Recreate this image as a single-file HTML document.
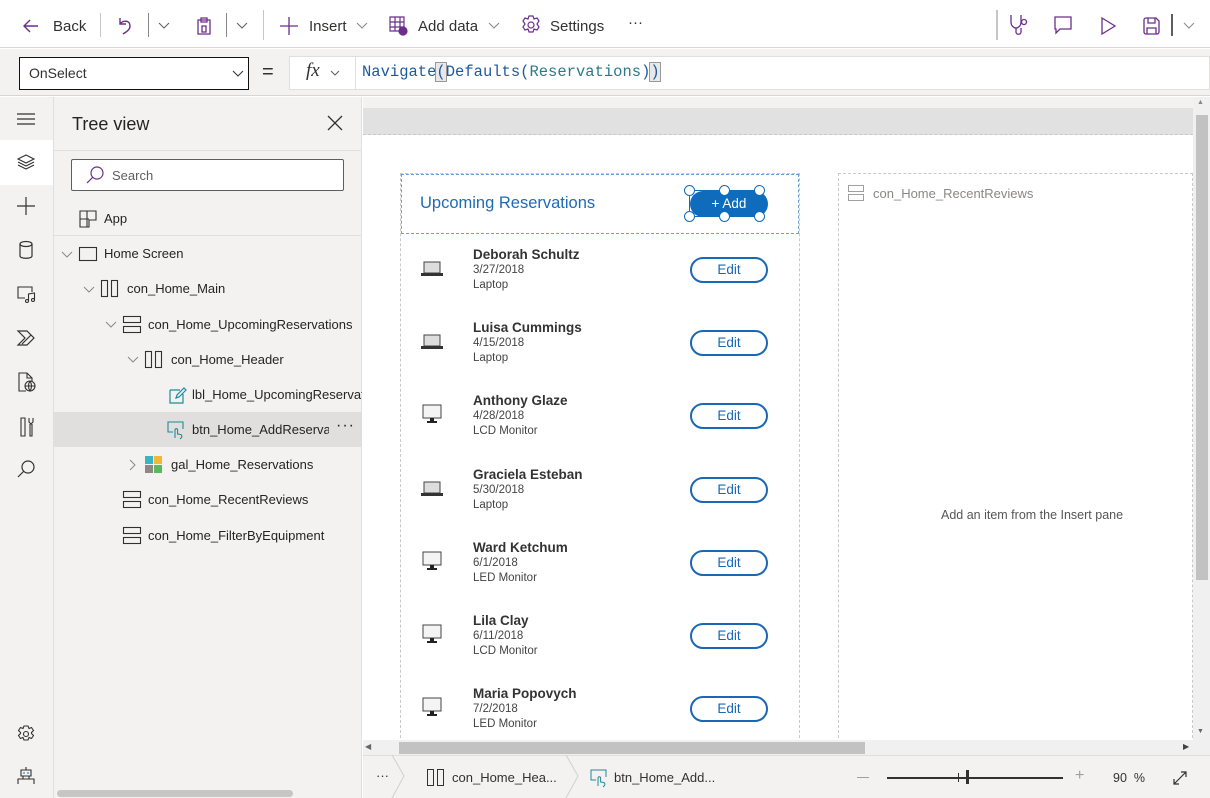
<!DOCTYPE html>
<html><head><meta charset="utf-8"><style>
*{box-sizing:border-box;margin:0;padding:0}
body{width:1210px;height:798px;overflow:hidden;font-family:"Liberation Sans",sans-serif;background:#fff;position:relative;color:#323130}
.a{position:absolute}
.t{position:absolute;white-space:nowrap}
svg{position:absolute;overflow:visible}
.tb{font-size:15px;color:#323130}
.tree{font-size:13px;color:#252423}
.nm{font-size:13.5px;font-weight:bold;color:#333}
.sm{font-size:11.5px;color:#444}
.edit{position:absolute;left:690px;width:78px;height:26px;border:2px solid #1a68b5;border-radius:13px;color:#1a68b5;font-size:13.5px;text-align:center;line-height:22px;background:#fff}
.h{position:absolute;width:11px;height:11px;border:1.5px solid #0f6cbd;border-radius:50%;background:#fff}
</style></head><body>
<!-- top toolbar -->
<div class="a" style="left:0;top:0;width:1210px;height:48px;background:#fff;border-bottom:1px solid #d8d6d4"></div>
<svg width="20" height="20" style="left:22px;top:17px" fill="none" stroke="#6b2f8a" stroke-width="1.4"><path d="M16 9H2M8 3L2 9l6 6"/></svg>
<div class="t tb" style="left:53px;top:18px">Back</div>
<div class="a" style="left:100px;top:13px;width:1px;height:24px;background:#c8c6c4"></div>
<svg width="20" height="20" style="left:116px;top:16px" fill="none" stroke="#6b2f8a" stroke-width="1.4"><path d="M4 2v6h6M4 8c3-4 10-4 10 2c0 4-4 6-7 8"/></svg>
<div class="a" style="left:148px;top:13px;width:1px;height:24px;background:#8a8886"></div>
<svg width="12" height="8" style="left:158px;top:22px" fill="none" stroke="#605e5c"><path d="M1 1l5 5 5-5"/></svg>
<svg width="18" height="20" style="left:195px;top:16px" fill="none" stroke="#6b2f8a" stroke-width="1.3"><path d="M3 4h12v14H3zM6 2h6v4H6zM7 10h4v6H7z"/></svg>
<div class="a" style="left:226px;top:13px;width:1px;height:24px;background:#8a8886"></div>
<svg width="12" height="8" style="left:236px;top:22px" fill="none" stroke="#605e5c"><path d="M1 1l5 5 5-5"/></svg>
<div class="a" style="left:263px;top:10px;width:1px;height:30px;background:#c8c6c4"></div>
<svg width="18" height="18" style="left:280px;top:17px" fill="none" stroke="#6b2f8a" stroke-width="1.3"><path d="M9 0v18M0 9h18"/></svg>
<div class="t tb" style="left:309px;top:18px">Insert</div>
<svg width="12" height="8" style="left:356px;top:22px" fill="none" stroke="#8a8886"><path d="M1 1l5 5 5-5"/></svg>
<svg width="20" height="20" style="left:389px;top:16px" fill="none" stroke="#6b2f8a" stroke-width="1.2"><path d="M1 1h14v14H1zM1 6h14M1 11h14M6 1v14M11 1v14"/><circle cx="14" cy="15" r="4" fill="#6b2f8a"/></svg>
<div class="t tb" style="left:418px;top:18px">Add data</div>
<svg width="12" height="8" style="left:488px;top:22px" fill="none" stroke="#8a8886"><path d="M1 1l5 5 5-5"/></svg>
<svg width="20" height="20" style="left:521px;top:15px" fill="none" stroke="#6b2f8a" stroke-width="1.2"><circle cx="10" cy="10" r="3"/><path d="M8 1h4l1 3 3-1 2 3-2 3 2 3-2 3-3-1-1 3H8l-1-3-3 1-2-3 2-3-2-3 2-3 3 1z"/></svg>
<div class="t tb" style="left:550px;top:18px">Settings</div>
<div class="t tb" style="left:628px;top:14px">···</div>
<div class="a" style="left:996px;top:10px;width:2px;height:30px;background:#c8c6c4"></div>
<svg width="20" height="22" style="left:1009px;top:14px" fill="none" stroke="#6b2f8a" stroke-width="1.3"><path d="M2 1v7c0 4 3 6 5 6s5-2 5-6V1M7 14v4c0 3 5 3 5 0v-4"/><circle cx="15" cy="8" r="2.5"/></svg>
<svg width="22" height="20" style="left:1053px;top:16px" fill="none" stroke="#6b2f8a" stroke-width="1.3"><path d="M2 1h16v12H7l-4 4v-4H2z"/></svg>
<svg width="18" height="18" style="left:1100px;top:17px" fill="none" stroke="#6b2f8a" stroke-width="1.3"><path d="M2 1l13 8-13 8z"/></svg>
<svg width="18" height="18" style="left:1143px;top:17px" fill="none" stroke="#6b2f8a" stroke-width="1.3"><path d="M1 3a2 2 0 0 1 2-2h10l3 3v11a2 2 0 0 1-2 2H3a2 2 0 0 1-2-2zM5 1v5h7V1M4 17v-6h9v6"/></svg>
<div class="a" style="left:1171px;top:14px;width:2px;height:22px;background:#605e5c"></div>
<svg width="12" height="8" style="left:1183px;top:22px" fill="none" stroke="#8a8886"><path d="M1 1l5 5 5-5"/></svg>
<!-- formula bar -->
<div class="a" style="left:0;top:49px;width:1210px;height:47px;background:#f3f2f1;border-bottom:1px solid #d8d6d4"></div>
<div class="a" style="left:19px;top:57px;width:230px;height:33px;background:#fff;border:1px solid #111"></div>
<div class="t" style="left:29px;top:65px;font-size:14px;color:#323130">OnSelect</div>
<svg width="12" height="8" style="left:232px;top:70px" fill="none" stroke="#323130"><path d="M1 1l5 5 5-5"/></svg>
<div class="t" style="left:262px;top:61px;font-size:20px">=</div>
<div class="a" style="left:289px;top:56px;width:921px;height:34px;background:#fff;border:1px solid #e1dfdd"></div>
<div class="a" style="left:355px;top:56px;width:1px;height:34px;background:#e1dfdd"></div>
<div class="t" style="left:306px;top:60px;font-size:19px;font-style:italic;font-family:'Liberation Serif',serif">fx</div>
<svg width="10" height="6" style="left:330px;top:70px" fill="none" stroke="#605e5c"><path d="M1 1l4 4 4-4"/></svg>
<div class="t" style="left:362px;top:63px;font-family:'Liberation Mono',monospace;font-size:15.5px;color:#1e5a9e">Navigate<span style="background:#e8e8e8;outline:1px solid #999">(</span>Defaults(<span style="color:#2a7a8a">Reservations</span>)<span style="background:#e8e8e8;outline:1px solid #999">)</span></div>
<!-- left rail -->
<div class="a" style="left:0;top:97px;width:54px;height:701px;background:#f3f2f1;border-right:1px solid #e1dfdd"></div>
<div class="a" style="left:0;top:140px;width:53px;height:45px;background:#fff"></div>
<svg width="18" height="12" style="left:17px;top:113px" fill="none" stroke="#323130" stroke-width="1.2"><path d="M0 1h18M0 6h18M0 11h18"/></svg>
<svg width="18" height="16" style="left:17px;top:154px" fill="none" stroke="#323130" stroke-width="1.1"><path d="M9 1l8 4-8 4-8-4zM1 8l8 4 8-4M1 11l8 4 8-4"/></svg>
<svg width="18" height="18" style="left:17px;top:197px" fill="none" stroke="#323130" stroke-width="1.2"><path d="M9 0v18M0 9h18"/></svg>
<svg width="14" height="18" style="left:19px;top:241px" fill="none" stroke="#323130" stroke-width="1.2"><ellipse cx="7" cy="3" rx="6" ry="2.5"/><path d="M1 3v12c0 3 12 3 12 0V3"/></svg>
<svg width="20" height="18" style="left:17px;top:285px" fill="none" stroke="#323130" stroke-width="1.1"><path d="M8 13H1V2h14v5"/><circle cx="10" cy="16" r="1.5"/><circle cx="16" cy="15" r="1.5"/><path d="M11.5 16V9l6-1v7"/></svg>
<svg width="18" height="16" style="left:17px;top:330px" fill="none" stroke="#323130" stroke-width="1.2"><path d="M1 1h9l7 7-7 7H1l7-7zM5 14l9-9"/></svg>
<svg width="18" height="20" style="left:18px;top:372px" fill="none" stroke="#323130" stroke-width="1.1"><path d="M8 19H1V1h8l5 5v3M9 1v5h5"/><circle cx="12" cy="14" r="5"/><path d="M7 14h10M12 9c-2 3-2 7 0 10c2-3 2-7 0-10"/></svg>
<svg width="16" height="20" style="left:19px;top:417px" fill="none" stroke="#323130" stroke-width="1.1"><path d="M2 1v18h4V1zM10 1v4l2 2 2-2V1M11 7v12h2V7"/></svg>
<svg width="18" height="18" style="left:17px;top:460px" fill="none" stroke="#323130" stroke-width="1.2"><circle cx="11" cy="7" r="6"/><path d="M7 11L1 17"/></svg>
<svg width="18" height="18" style="left:17px;top:725px" fill="none" stroke="#323130" stroke-width="1.1"><circle cx="9" cy="9" r="2.5"/><path d="M7 1h4l1 2.5 2.5-1 2 3-2 2 0 1 2 2-2 3-2.5-1-1 2.5H7l-1-2.5-2.5 1-2-3 2-2v-1l-2-2 2-3 2.5 1z"/></svg>
<svg width="18" height="18" style="left:17px;top:767px" fill="none" stroke="#323130" stroke-width="1.1"><path d="M9 0v3M4 3h10v6H4zM1 17v-5h16v5M6 9v3M12 9v3"/><path d="M6 6h2M10 6h2" stroke="#0f6cbd"/></svg>
<!-- tree panel -->
<div class="a" style="left:54px;top:97px;width:308px;height:701px;background:#f3f2f1;border-right:1px solid #e1dfdd"></div>
<div class="t" style="left:72px;top:114px;font-size:18px;color:#252423">Tree view</div>
<svg width="14" height="14" style="left:328px;top:116px" fill="none" stroke="#323130" stroke-width="1.3"><path d="M0 0l14 14M14 0L0 14"/></svg>
<div class="a" style="left:54px;top:150px;width:308px;height:1px;background:#e1dfdd"></div>
<div class="a" style="left:71px;top:159px;width:273px;height:32px;border:1px solid #605e5c;background:#fff;border-radius:2px"></div>
<svg width="18" height="18" style="left:86px;top:166px" fill="none" stroke="#6b2f8a" stroke-width="1.2"><circle cx="11" cy="7" r="6"/><path d="M7 11L1 17"/></svg>
<div class="t" style="left:112px;top:168px;font-size:13px;color:#605e5c">Search</div>
<svg width="18" height="18" style="left:79px;top:210px" fill="none" stroke="#323130" stroke-width="1.1"><path d="M1 1h16v9H10v7H1zM1 9h9M8 1v16"/></svg>
<div class="t tree" style="left:104px;top:211px">App</div>
<div class="a" style="left:54px;top:235px;width:308px;height:1px;background:#e1dfdd"></div>
<svg width="12" height="8" style="left:61px;top:251px" fill="none" stroke="#8a8886"><path d="M1 1l5 5 5-5"/></svg>
<svg width="19" height="14" style="left:79px;top:247px" fill="none" stroke="#323130" stroke-width="1.1"><rect x="0.5" y="0.5" width="17" height="13"/></svg>
<div class="t tree" style="left:104px;top:246px">Home Screen</div>
<svg width="12" height="8" style="left:83px;top:286px" fill="none" stroke="#8a8886"><path d="M1 1l5 5 5-5"/></svg>
<svg width="18" height="18" style="left:101px;top:280px" fill="none" stroke="#323130" stroke-width="1.1"><rect x="0.5" y="0.5" width="6" height="16"/><rect x="10.5" y="0.5" width="6" height="16"/></svg>
<div class="t tree" style="left:127px;top:281px">con_Home_Main</div>
<svg width="12" height="8" style="left:105px;top:321px" fill="none" stroke="#8a8886"><path d="M1 1l5 5 5-5"/></svg>
<svg width="18" height="18" style="left:123px;top:316px" fill="none" stroke="#323130" stroke-width="1.1"><rect x="0.5" y="0.5" width="17" height="6"/><rect x="0.5" y="10.5" width="17" height="6"/></svg>
<div class="t tree" style="left:148px;top:317px">con_Home_UpcomingReservations</div>
<svg width="12" height="8" style="left:127px;top:356px" fill="none" stroke="#8a8886"><path d="M1 1l5 5 5-5"/></svg>
<svg width="18" height="18" style="left:145px;top:351px" fill="none" stroke="#323130" stroke-width="1.1"><rect x="0.5" y="0.5" width="6" height="16"/><rect x="10.5" y="0.5" width="6" height="16"/></svg>
<div class="t tree" style="left:171px;top:352px">con_Home_Header</div>
<svg width="17" height="17" style="left:169px;top:387px" fill="none" stroke="#1f8a9a" stroke-width="1.2"><path d="M1 3h10M1 3v13h13V7"/><path d="M7 11l1-3 7-7 2 2-7 7z"/></svg>
<div class="t tree" style="left:192px;top:387px;width:170px;overflow:hidden">lbl_Home_UpcomingReservations</div>
<div class="a" style="left:54px;top:412px;width:308px;height:35px;background:#e1dfdd"></div>
<svg width="18" height="18" style="left:167px;top:421px" fill="none" stroke="#1f8a9a" stroke-width="1.1"><path d="M6 11H1V1h15v7"/><path d="M8 17v-8a1.3 1.3 0 0 1 2.6 0v4l3 0.5c1.5 0.5 1.5 1.5 1 3L13 18"/></svg>
<div class="t tree" style="left:192px;top:422px;width:137px;overflow:hidden">btn_Home_AddReservation</div>
<div class="t tree" style="left:336px;top:417px;font-size:16px;letter-spacing:1px">···</div>
<svg width="8" height="12" style="left:129px;top:459px" fill="none" stroke="#8a8886"><path d="M1 1l5 5-5 5"/></svg>
<div class="a" style="left:145px;top:456px;width:8px;height:8px;background:#3bb3c3"></div>
<div class="a" style="left:154px;top:456px;width:8px;height:8px;background:#f2b63a"></div>
<div class="a" style="left:145px;top:465px;width:8px;height:8px;background:#8a8886"></div>
<div class="a" style="left:154px;top:465px;width:8px;height:8px;background:#5cb85c"></div>
<div class="t tree" style="left:171px;top:457px">gal_Home_Reservations</div>
<svg width="18" height="18" style="left:123px;top:491px" fill="none" stroke="#323130" stroke-width="1.1"><rect x="0.5" y="0.5" width="17" height="6"/><rect x="0.5" y="10.5" width="17" height="6"/></svg>
<div class="t tree" style="left:148px;top:492px">con_Home_RecentReviews</div>
<svg width="18" height="18" style="left:123px;top:527px" fill="none" stroke="#323130" stroke-width="1.1"><rect x="0.5" y="0.5" width="17" height="6"/><rect x="0.5" y="10.5" width="17" height="6"/></svg>
<div class="t tree" style="left:148px;top:528px">con_Home_FilterByEquipment</div>
<div class="a" style="left:57px;top:790px;width:236px;height:7px;background:#c8c6c4;border-radius:4px"></div>
<!-- canvas -->
<div class="a" style="left:363px;top:97px;width:830px;height:643px;background:#f3f2f1"></div>
<div class="a" style="left:363px;top:108px;width:830px;height:27px;background:#e1e1e1;border-bottom:1px dashed #c8c8c8"></div>
<div class="a" style="left:363px;top:135px;width:830px;height:605px;background:#fff"></div>
<!-- left container -->
<div class="a" style="left:400px;top:173px;width:400px;height:570px;border:1px dashed #c8c8c8"></div>
<div class="a" style="left:401px;top:174px;width:398px;height:60px;border:1px dashed #6a9fd4"></div>
<div class="t" style="left:420px;top:194px;font-size:16.5px;color:#1e6bb8">Upcoming Reservations</div>
<div class="a" style="left:690px;top:191px;width:78px;height:26px;background:#0f6cbd;border-radius:13px;color:#fff;font-size:13.5px;text-align:center;line-height:26px">+ Add</div>
<div class="a" style="left:689px;top:190px;width:71px;height:27px;border:1px solid #0f6cbd"></div>
<div class="h" style="left:684px;top:185px"></div><div class="h" style="left:719px;top:185px"></div><div class="h" style="left:754px;top:185px"></div>
<div class="h" style="left:684px;top:211px"></div><div class="h" style="left:719px;top:211px"></div><div class="h" style="left:754px;top:211px"></div>
<!-- rows -->
<div id="rows"></div>
<!-- right container -->
<div class="a" style="left:838px;top:173px;width:355px;height:570px;border:1px dashed #c8c8c8"></div>
<svg width="16" height="16" style="left:848px;top:185px" fill="none" stroke="#a0a0a0" stroke-width="1"><rect x="0.5" y="0.5" width="15" height="6"/><rect x="0.5" y="9.5" width="15" height="6"/></svg>
<div class="t" style="left:873px;top:186px;font-size:13px;color:#8a8886">con_Home_RecentReviews</div>
<div class="t" style="left:941px;top:508px;font-size:12.5px;color:#555">Add an item from the Insert pane</div>
<!-- scrollbars -->
<div class="a" style="left:1193px;top:97px;width:17px;height:643px;background:#f0f0f0"></div>
<div class="a" style="left:1196px;top:115px;width:12px;height:465px;background:#c2c2c2"></div>
<div class="t" style="left:1197px;top:99px;font-size:7px;color:#888">▲</div>
<div class="t" style="left:1197px;top:728px;font-size:7px;color:#666">▼</div>
<div class="a" style="left:363px;top:740px;width:847px;height:15px;background:#f0f0f0"></div>
<div class="a" style="left:399px;top:742px;width:466px;height:12px;background:#c2c2c2"></div>
<div class="t" style="left:365px;top:742px;font-size:8px;color:#666">◀</div>
<div class="t" style="left:1183px;top:742px;font-size:8px;color:#444">▶</div>
<!-- bottom status -->
<div class="a" style="left:363px;top:755px;width:847px;height:43px;background:#f3f2f1;border-top:1px solid #e1dfdd"></div>
<div class="t" style="left:376px;top:768px;font-size:13px">···</div>
<svg width="20" height="43" style="left:392px;top:755px" fill="none" stroke="#d0d0d0"><path d="M0 0l12 21L0 43"/></svg>
<svg width="20" height="43" style="left:566px;top:755px" fill="none" stroke="#d0d0d0"><path d="M0 0l12 21L0 43"/></svg>
<svg width="18" height="18" style="left:427px;top:769px" fill="none" stroke="#323130" stroke-width="1"><rect x="0.5" y="0.5" width="6" height="16"/><rect x="10.5" y="0.5" width="6" height="16"/></svg>
<div class="t" style="left:452px;top:770px;font-size:13px">con_Home_Hea...</div>
<svg width="18" height="18" style="left:590px;top:769px" fill="none" stroke="#1f8a9a" stroke-width="1"><path d="M6 11H1V1h15v7"/><path d="M8 17v-8a1.3 1.3 0 0 1 2.6 0v4l3 .5c1.5.5 1.5 1.5 1 3L13 18"/></svg>
<div class="t" style="left:614px;top:770px;font-size:13px">btn_Home_Add...</div>
<div class="a" style="left:857px;top:777px;width:12px;height:1px;background:#a19f9d"></div>
<div class="a" style="left:887px;top:777px;width:176px;height:2px;background:#323130"></div>
<div class="a" style="left:966px;top:770px;width:3px;height:14px;background:#323130"></div>
<div class="a" style="left:958px;top:773px;width:1px;height:9px;background:#323130"></div>
<div class="t" style="left:1075px;top:767px;font-size:16px;color:#a19f9d">+</div>
<div class="t" style="left:1113px;top:771px;font-size:12.5px">90 &nbsp;%</div>
<svg width="14" height="14" style="left:1173px;top:771px" fill="none" stroke="#323130" stroke-width="1.2"><path d="M1 13L13 1M8 1h5v5M1 8v5h5"/></svg>
<script>
var d=[["Deborah Schultz","3/27/2018","Laptop"],["Luisa Cummings","4/15/2018","Laptop"],["Anthony Glaze","4/28/2018","LCD Monitor"],["Graciela Esteban","5/30/2018","Laptop"],["Ward Ketchum","6/1/2018","LED Monitor"],["Lila Clay","6/11/2018","LCD Monitor"],["Maria Popovych","7/2/2018","LED Monitor"]];
var h="";d.forEach(function(r,i){var y=Math.round(247+i*73.2);
var ic=r[2]=="Laptop"?'<svg width="22" height="16" style="left:421px;top:'+(y+14)+'px"><rect x="3" y="1" width="16" height="11" fill="#ddd" stroke="#444"/><rect x="0" y="12" width="22" height="3" fill="#333"/></svg>':'<svg width="20" height="20" style="left:422px;top:'+(y+11)+'px"><rect x="1" y="1" width="18" height="13" fill="#f4f4f4" stroke="#444"/><rect x="8" y="14" width="4" height="3" fill="#222"/><rect x="5" y="17" width="10" height="2" fill="#222"/></svg>';
h+=ic+'<div class="t nm" style="left:473px;top:'+y+'px">'+r[0]+'</div><div class="t sm" style="left:473px;top:'+(y+17)+'px">'+r[1]+'</div><div class="t sm" style="left:473px;top:'+(y+32)+'px">'+r[2]+'</div><div class="edit" style="top:'+(y+10)+'px">Edit</div>';});
document.getElementById("rows").outerHTML=h;
</script>
</body></html>
